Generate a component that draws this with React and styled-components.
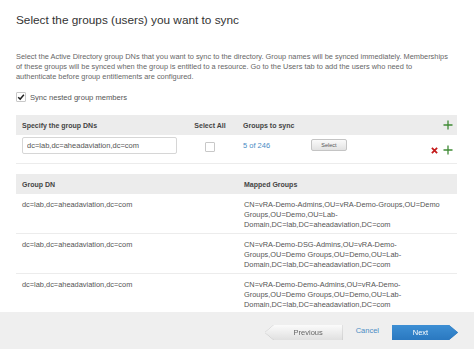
import React from 'react';
import styled, { createGlobalStyle } from 'styled-components';

const GlobalStyle = createGlobalStyle`
  html, body {
    margin: 0;
    padding: 0;
    background: #fff;
  }
  body {
    font-family: "Liberation Sans", Arial, sans-serif;
    color: #555;
  }
`;

const Page = styled.div`
  width: 474px;
  height: 351px;
  display: flex;
  flex-direction: column;
  overflow: hidden;
`;

const Content = styled.div`
  flex: 1;
  overflow: hidden;
  padding: 13px 17px 0 16px;
`;

const Title = styled.h2`
  margin: 0;
  font-size: 11.8px;
  font-weight: normal;
  color: #333;
  line-height: 15px;
`;

const Intro = styled.p`
  margin: 24px 0 0;
  font-size: 7.4px;
  line-height: 10px;
  color: #666;
  white-space: nowrap;
`;

const CheckRow = styled.label`
  display: flex;
  align-items: center;
  gap: 4px;
  margin-top: 10px;
  font-size: 7.6px;
  color: #555;
`;

const Box = styled.span`
  width: 10px;
  height: 10px;
  box-sizing: border-box;
  border: 1px solid #c8c8c8;
  border-radius: 1px;
  background: #fff;
  display: flex;
  align-items: center;
  justify-content: center;
  flex-shrink: 0;
`;

const SyncTable = styled.div`
  margin-top: 13px;
  border-bottom: 1px solid #ececec;
`;

const SyncGrid = styled.div`
  display: grid;
  grid-template-columns: 163px 50px 1fr 24px;
  padding: 0 4px 0 6px;
  height: ${p => (p.$head ? '20px' : '28px')};
  background: ${p => (p.$head ? '#ececec' : '#fff')};
  align-items: ${p => (p.$head ? 'center' : 'start')};
  padding-top: ${p => (p.$head ? '0' : '2px')};
  box-sizing: border-box;
`;

const HeadCell = styled.div`
  font-size: 7px;
  font-weight: bold;
  color: #444;
  text-align: ${p => (p.$center ? 'center' : 'left')};
  padding-left: ${p => (p.$indent ? '8px' : '0')};
`;

const Cell = styled.div`
  display: flex;
  align-items: center;
  justify-content: ${p => (p.$center ? 'center' : p.$end ? 'flex-end' : 'flex-start')};
  padding-left: ${p => (p.$indent ? '8px' : '0')};
  padding-top: ${p => p.$top || '0'};
  gap: 5px;
`;

const DnInput = styled.input`
  width: 155px;
  height: 17px;
  box-sizing: border-box;
  border: 1px solid #d6d6d6;
  border-radius: 2px;
  padding: 0 4px;
  font-family: "Liberation Sans", Arial, sans-serif;
  font-size: 7.5px;
  color: #555;
  outline: none;
`;

const CountLink = styled.a`
  font-size: 7.5px;
  color: #4a8cc4;
  text-decoration: none;
  width: 63px;
`;

const SmallButton = styled.button`
  width: 36px;
  height: 12px;
  padding: 0;
  border: 1px solid #c4c4c4;
  border-radius: 2px;
  background: linear-gradient(#fafafa, #e2e2e2);
  font-family: "Liberation Sans", Arial, sans-serif;
  font-size: 5.5px;
  color: #555;
`;

const MapTable = styled.div`
  margin-top: 10px;
`;

const MapGrid = styled.div`
  display: grid;
  grid-template-columns: 222px 1fr;
  padding: ${p => (p.$head ? '0 6px' : '6px 6px 4px')};
  height: ${p => (p.$head ? '20px' : '40px')};
  align-items: ${p => (p.$head ? 'center' : 'start')};
  background: ${p => (p.$head ? '#ececec' : '#fff')};
  border-bottom: ${p => (p.$head ? 'none' : '1px solid #ececec')};
  box-sizing: border-box;
`;

const MapText = styled.div`
  font-size: 7.4px;
  line-height: 10px;
  color: #555;
`;

const Footer = styled.div`
  height: 37px;
  margin-bottom: 2px;
  background: #efefef;
  display: flex;
  align-items: center;
  justify-content: flex-end;
  padding-right: 16px;
  flex-shrink: 0;
`;

const ArrowWrap = styled.div`
  filter: drop-shadow(0 0 0.6px ${p => (p.$primary ? '#2a6eab' : '#9a9a9a')});
`;

const ArrowButton = styled.button`
  border: none;
  padding: 0;
  height: 15px;
  width: ${p => p.$w}px;
  font-family: "Liberation Sans", Arial, sans-serif;
  font-size: 7.5px;
  color: ${p => (p.$primary ? '#fff' : '#666')};
  background: ${p => (p.$primary
    ? 'linear-gradient(#3d8fd4, #2a78c0)'
    : 'linear-gradient(#fbfbfb, #e0e0e0)')};
  clip-path: ${p => (p.$primary
    ? 'polygon(0 0, calc(100% - 9px) 0, 100% 50%, calc(100% - 9px) 100%, 0 100%)'
    : 'polygon(9px 0, 100% 0, 100% 100%, 9px 100%, 0 50%)')};
  padding-left: ${p => (p.$primary ? '0' : '9px')};
  padding-right: ${p => (p.$primary ? '9px' : '0')};
`;

const CancelLink = styled.a`
  font-size: 7.5px;
  color: #4a8cc4;
  margin: 0 13px;
`;

const Check = () => (
  <svg width="8" height="8" viewBox="0 0 10 10">
    <path d="M1.5 5.2 L4 7.6 L8.6 2.2" fill="none" stroke="#222" strokeWidth="1.8" />
  </svg>
);

const Plus = () => (
  <svg width="10" height="10" viewBox="0 0 10 10">
    <path d="M5 0.5 V9.5 M0.5 5 H9.5" stroke="#3f8a35" strokeWidth="1.3" />
  </svg>
);

const Cross = () => (
  <svg width="7" height="7" viewBox="0 0 8 8">
    <path d="M1 1 L7 7 M7 1 L1 7" stroke="#c41a1a" strokeWidth="2" />
  </svg>
);

const dn = 'dc=lab,dc=aheadaviation,dc=com';

const mapped = [
  ['CN=vRA-Demo-Admins,OU=vRA-Demo-Groups,OU=Demo', 'Groups,OU=Demo,OU=Lab-', 'Domain,DC=lab,DC=aheadaviation,DC=com'],
  ['CN=vRA-Demo-DSG-Admins,OU=vRA-Demo-', 'Groups,OU=Demo Groups,OU=Demo,OU=Lab-', 'Domain,DC=lab,DC=aheadaviation,DC=com'],
  ['CN=vRA-Demo-Demo-Admins,OU=vRA-Demo-', 'Groups,OU=Demo Groups,OU=Demo,OU=Lab-', 'Domain,DC=lab,DC=aheadaviation,DC=com'],
];

export default function App() {
  return (
    <Page>
      <GlobalStyle />
      <Content>
        <Title>Select the groups (users) you want to sync</Title>
        <Intro>
          Select the Active Directory group DNs that you want to sync to the directory. Group names will be synced immediately. Memberships<br />
          of these groups will be synced when the group is entitled to a resource. Go to the Users tab to add the users who need to<br />
          authenticate before group entitlements are configured.
        </Intro>
        <CheckRow>
          <Box><Check /></Box>
          Sync nested group members
        </CheckRow>

        <SyncTable>
          <SyncGrid $head>
            <HeadCell>Specify the group DNs</HeadCell>
            <HeadCell $center>Select All</HeadCell>
            <HeadCell $indent>Groups to sync</HeadCell>
            <Cell $end><Plus /></Cell>
          </SyncGrid>
          <SyncGrid>
            <Cell><DnInput defaultValue={dn} /></Cell>
            <Cell $center $top="5px"><Box /></Cell>
            <Cell $indent $top="2px">
              <CountLink>5 of 246</CountLink>
              <SmallButton>Select</SmallButton>
            </Cell>
            <Cell $end $top="8px"><Cross /><Plus /></Cell>
          </SyncGrid>
        </SyncTable>

        <MapTable>
          <MapGrid $head>
            <HeadCell>Group DN</HeadCell>
            <HeadCell>Mapped Groups</HeadCell>
          </MapGrid>
          {mapped.map((lines, i) => (
            <MapGrid key={i}>
              <MapText>{dn}</MapText>
              <MapText>
                {lines.map((l, j) => <div key={j}>{l}</div>)}
              </MapText>
            </MapGrid>
          ))}
        </MapTable>
      </Content>

      <Footer>
        <ArrowWrap>
          <ArrowButton $w={78}>Previous</ArrowButton>
        </ArrowWrap>
        <CancelLink>Cancel</CancelLink>
        <ArrowWrap $primary>
          <ArrowButton $primary $w={66}>Next</ArrowButton>
        </ArrowWrap>
      </Footer>
    </Page>
  );
}
